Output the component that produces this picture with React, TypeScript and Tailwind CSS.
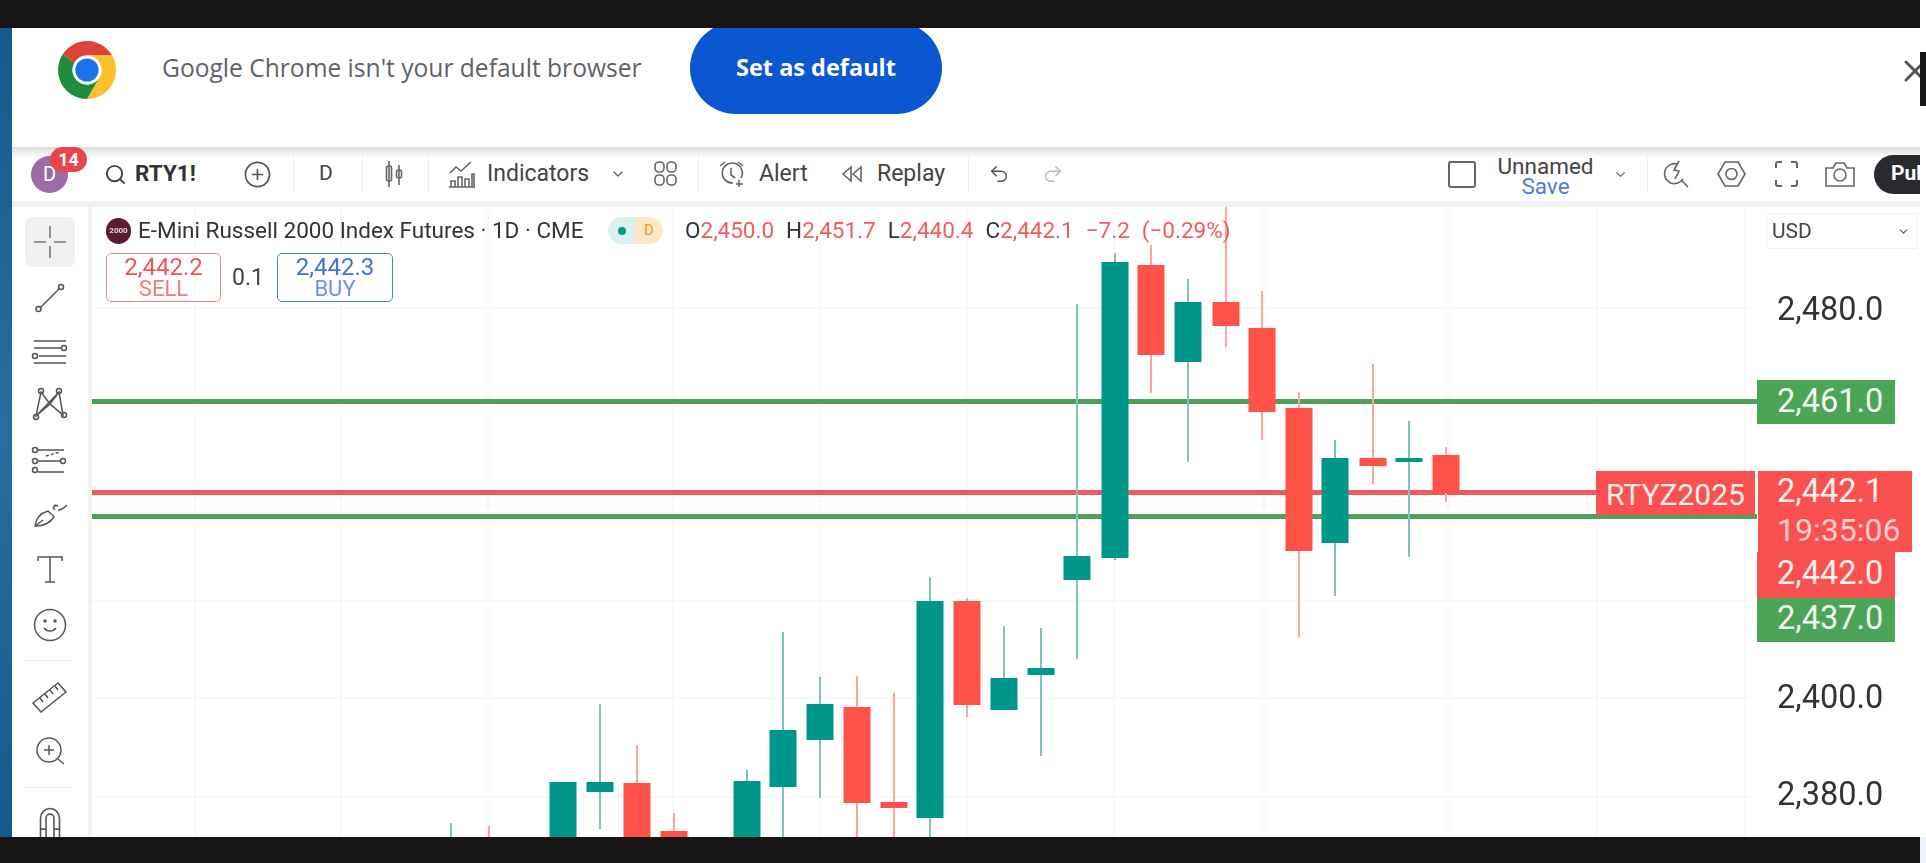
import React from 'react';
import { Search, CirclePlus, ChevronDown, Undo2, Redo2, X } from 'lucide-react';

const GREEN = '#00968a';
const RED = '#ff5249';

// [centre x, wick top, wick bottom, body top, body bottom, up?]
const candles: [number, number, number, number, number, boolean][] = [
  [451, 823, 838, 838, 838, true],
  [489, 826, 838, 838, 838, false],
  [563, 782, 838, 782, 838, true],
  [600, 704, 829, 782, 792, true],
  [637, 745, 838, 783, 838, false],
  [674, 813, 838, 831, 838, false],
  [747, 770, 838, 781, 838, true],
  [783, 632, 838, 730, 787, true],
  [820, 677, 798, 704, 740, true],
  [857, 676, 838, 707, 803, false],
  [894, 693, 838, 802, 808, false],
  [930, 577, 838, 601, 818, true],
  [967, 598, 717, 601, 705, false],
  [1004, 626, 710, 678, 710, true],
  [1041, 628, 756, 668, 675, true],
  [1077, 304, 659, 556, 580, true],
  [1115, 253, 560, 262, 558, true],
  [1151, 245, 393, 265, 355, false],
  [1188, 279, 462, 302, 362, true],
  [1226, 207, 347, 302, 326, false],
  [1262, 291, 440, 328, 412, false],
  [1299, 392, 637, 408, 551, false],
  [1335, 440, 596, 458, 543, true],
  [1373, 364, 484, 458, 466, false],
  [1409, 421, 557, 458, 462, true],
  [1446, 447, 502, 455, 493, false],
];

const gridX = [195, 341, 488, 673, 820, 967, 1114, 1264, 1448, 1597, 1745];
const gridY = [308, 406, 504, 601, 698, 797];

function ChartCanvas() {
  return (
    <svg className="absolute inset-0" width="1828" height="631" viewBox="92 207 1828 631">
      {gridX.map((x) => (
        <line key={x} x1={x} x2={x} y1="207" y2="838" stroke="#f7f7f7" strokeWidth="1.5" />
      ))}
      {gridY.map((y) => (
        <line key={y} x1="92" x2="1755" y1={y} y2={y} stroke="#f7f7f7" strokeWidth="1.5" />
      ))}
      <line x1="92" x2="1757" y1="401.5" y2="401.5" stroke="#4f9f5a" strokeWidth="5" />
      <line x1="92" x2="1600" y1="492.5" y2="492.5" stroke="#f4575a" strokeWidth="5" />
      <line x1="92" x2="1757" y1="516.5" y2="516.5" stroke="#4f9f5a" strokeWidth="5" />
      {candles.map(([x, wt, wb, bt, bb, up]) => (
        <g key={x}>
          <line x1={x} x2={x} y1={wt} y2={wb} stroke={up ? '#7fc2bd' : '#f9a5a0'} strokeWidth="2" />
          {bb > bt && <rect x={x - 13.5} y={bt} width="27" height={bb - bt} fill={up ? GREEN : RED} />}
        </g>
      ))}
    </svg>
  );
}

function ChromeLogo() {
  return (
    <svg width="58" height="58" viewBox="4 4 40 40" className="shrink-0">
      <path d="M7.2 13.2A20 20 0 0 1 41.32 14H24a10 10 0 0 0-8.66 5z" fill="#db4437" />
      <path d="M41.32 14H24a10 10 0 0 1 8.66 15L24 44a20 20 0 0 0 17.32-30z" fill="#fbc02d" />
      <path d="M7.2 13.2A20 20 0 0 0 24 44l8.66-15a10 10 0 0 1-17.32-10z" fill="#1e8e3e" />
      <circle cx="24" cy="24" r="10" fill="#fff" />
      <circle cx="24" cy="24" r="8" fill="#1a73e8" />
    </svg>
  );
}

function TopTool({ w, children }: { w: number; children: React.ReactNode }) {
  return (
    <svg width={w} height="28" viewBox={`0 0 ${w} 28`} fill="none" stroke="#666" strokeWidth="1.6" className="shrink-0">
      {children}
    </svg>
  );
}

function Sep({ ml }: { ml: string }) {
  return <div className={`${ml} w-px h-[38px] bg-[#f0f0f0] shrink-0`} />;
}

function TopToolbar() {
  return (
    <div className="h-[54px] flex items-center text-[#444] overflow-hidden bg-gradient-to-b from-[#dcdcdc] via-white via-20% to-white text-[23px] font-['Roboto',sans-serif]">
      <div className="ml-[19px] w-[37px] h-[37px] rounded-full bg-[#9c6ca5] shrink-0 flex items-center justify-center text-white text-[20px]">
        D
      </div>
      <div className="relative shrink-0 w-0 h-[54px]">
        <div className="absolute left-[-18px] top-0 w-[37px] h-[25px] rounded-full bg-[#e9454a] text-white text-[18px] font-bold flex items-center justify-center">14</div>
      </div>
      <Search className="ml-[36px] shrink-0 text-[#444]" size={23} />
      <div className="ml-[8px] w-[63px] shrink-0 font-bold text-[#333] text-[22.5px]">RTY1!</div>
      <CirclePlus className="ml-[45px] shrink-0 text-[#555]" size={29} strokeWidth={1.4} />
      <Sep ml="ml-[21px]" />
      <div className="ml-[24px] w-4 shrink-0 text-center text-[21px]">D</div>
      <Sep ml="ml-[28px]" />
      <div className="ml-[21px] w-5 shrink-0">
        <TopTool w={20}>
          <path d="M5 1v26M15 5v20" />
          <rect x="2.5" y="6" width="5" height="15" rx="2" />
          <rect x="12.5" y="10" width="5" height="8" rx="2" />
        </TopTool>
      </div>
      <Sep ml="ml-[24px]" />
      <div className="ml-[19px] w-[27px] shrink-0">
        <TopTool w={27}>
          <path d="M2 13l6-6 5 4 10-9M3 27v-6h4v6M10 27V17h4v10M17 27V19h4v8M24 27V14h2v13M1 27h26" />
        </TopTool>
      </div>
      <div className="ml-3 w-[103px] shrink-0">Indicators</div>
      <ChevronDown className="ml-[20px] shrink-0 text-[#666]" size={16} />
      <div className="ml-[26px] w-[26px] shrink-0">
        <TopTool w={26}>
          <rect x="3" y="2" width="9" height="10" rx="4" />
          <rect x="15" y="2" width="9" height="10" rx="4" />
          <rect x="3" y="15" width="9" height="10" rx="4" />
          <rect x="15" y="15" width="9" height="10" rx="4" />
        </TopTool>
      </div>
      <Sep ml="ml-[20px]" />
      <div className="ml-[19px] w-[27px] shrink-0">
        <TopTool w={27}>
          <path d="M15 23a10 10 0 1 1 8-5M13 8v7l4 3M2 6l5-4M20 2l5 4M21 20v7M18 24h7" />
        </TopTool>
      </div>
      <div className="ml-[14px] w-[51px] shrink-0">Alert</div>
      <div className="ml-[30px] w-[23px] shrink-0">
        <TopTool w={23}>
          <path d="M11 7l-8 7 8 7zM21 7l-8 7 8 7z" />
        </TopTool>
      </div>
      <div className="ml-[14px] w-[69px] shrink-0">Replay</div>
      <Sep ml="ml-[22px]" />
      <Undo2 className="ml-[19px] shrink-0 text-[#555]" size={22} strokeWidth={1.6} />
      <Redo2 className="ml-[32px] shrink-0 text-[#bbb]" size={22} strokeWidth={1.6} />
      <div className="ml-[384px] w-[28px] h-[27px] rounded-[3px] border-2 border-[#666] shrink-0" />
      <div className="ml-[21px] w-[97px] shrink-0 flex flex-col items-center pt-[4px] text-[22.5px]">
        <div className="leading-[20px] text-[#444]">Unnamed</div>
        <div className="leading-[20px] text-[#4a7fe0]">Save</div>
      </div>
      <ChevronDown className="ml-[19px] shrink-0 text-[#666]" size={15} />
      <Sep ml="ml-[19px]" />
      <div className="ml-[14px] w-[28px] shrink-0">
        <TopTool w={28}>
          <path d="M15 4a10 10 0 1 0 6 15M19 20l7 7M17 1l-5 9 5 1-4 8" />
        </TopTool>
      </div>
      <div className="ml-[26px] w-[31px] shrink-0">
        <TopTool w={31}>
          <path d="M9 2h13l7 12-7 12H9L2 14z" />
          <circle cx="15.5" cy="14" r="5.5" />
        </TopTool>
      </div>
      <div className="ml-[27px] w-[25px] shrink-0">
        <TopTool w={25}>
          <path d="M8 2H4Q2 2 2 4v4M17 2h4q2 0 2 2v4M8 26H4q-2 0-2-2v-4M17 26h4q2 0 2-2v-4" strokeWidth="2" />
        </TopTool>
      </div>
      <div className="ml-[25px] w-[32px] shrink-0">
        <TopTool w={32}>
          <path d="M2 8h7l3-5h8l3 5h7v18H2z" />
          <circle cx="16" cy="15" r="6" />
        </TopTool>
      </div>
      <div className="ml-[18px] w-[100px] h-[39px] rounded-full bg-[#2a2a2e] text-white font-bold pl-[17px] flex items-center shrink-0 text-[21px]">
        Publish
      </div>
    </div>
  );
}

function SideIcon({ children }: { children: React.ReactNode }) {
  return (
    <div className="h-[54px] flex items-center justify-center">
      <svg width="38" height="38" viewBox="0 0 38 38" fill="none" stroke="#555" strokeWidth="1.5">
        {children}
      </svg>
    </div>
  );
}

function SideToolbar() {
  return (
    <div className="w-[76px] shrink-0 flex flex-col items-center pt-[10px] overflow-hidden">
      <div className="w-[50px] h-[50px] shrink-0 mb-[4px] rounded-md bg-[#f0f0f0] flex items-center justify-center">
        <svg width="34" height="34" viewBox="0 0 34 34" stroke="#777" strokeWidth="1.6">
          <path d="M17 1v12M17 21v12M1 17h12M21 17h12" />
        </svg>
      </div>
      <SideIcon>
        <path d="M9 29L29 9" />
        <circle cx="7.5" cy="30" r="2.5" />
        <circle cx="30" cy="8" r="2.5" />
      </SideIcon>
      <SideIcon>
        <path d="M3 9h32M3 16h27M8 24h27" />
        <circle cx="33" cy="16" r="2.5" />
        <circle cx="4" cy="24" r="2.5" />
        <path d="M3 31h32" />
      </SideIcon>
      <SideIcon>
        <path d="M10 7L5 31l14-12 13 11-4-23-9 12L10 7zM5 31l23-24" />
        <circle cx="10" cy="6" r="2.5" />
        <circle cx="28" cy="6" r="2.5" />
        <circle cx="5" cy="32" r="2.5" />
        <circle cx="33" cy="30" r="2.5" />
      </SideIcon>
      <div className="mt-[3px]">
        <SideIcon>
          <path d="M7 8h26M7 19h22M7 30h26" />
          <path d="M15 14l14-4" strokeDasharray="3 2" />
          <circle cx="4" cy="8" r="2.5" />
          <circle cx="4" cy="19" r="2.5" />
          <circle cx="4" cy="28" r="2.5" />
          <circle cx="32" cy="19" r="2.5" />
        </SideIcon>
      </div>
      <SideIcon>
        <path d="M4 31c1-8 6-13 13-15 3 3 5 4 6 6-4 6-10 9-19 9zM4 31l8-6" />
        <path d="M24 15c-3-2-1-6 3-4M27 15c4 0 7-3 9-5" />
      </SideIcon>
      <div className="mt-px">
        <SideIcon>
          <path d="M7 11V7h24v4M19 7v25M14 32h10" />
        </SideIcon>
      </div>
      <div className="mt-[2px]">
        <SideIcon>
          <circle cx="19" cy="19" r="15.5" />
          <path d="M13 22c3 4 9 4 12 0" />
          <circle cx="14" cy="15" r="1" />
          <circle cx="24" cy="15" r="1" />
        </SideIcon>
      </div>
      <div className="h-px w-[48px] bg-[#eeeeee] my-[8px] shrink-0" />
      <SideIcon>
        <path d="M2 27L27 7l8 9-25 20z" />
        <path d="M9 22l3 4M14 18l3 4M19 14l3 4M24 10l3 4" />
      </SideIcon>
      <div className="mt-[2px]">
        <SideIcon>
          <circle cx="18" cy="18" r="12" />
          <path d="M27 27l6 5M18 13v10M13 18h10" />
        </SideIcon>
      </div>
      <div className="h-px w-[48px] bg-[#eeeeee] my-[9px] shrink-0" />
      <svg width="24" height="30" viewBox="0 0 30 38" fill="none" stroke="#555" strokeWidth="2" className="shrink-0 mt-[10px]">
        <path d="M3 38V14a12 12 0 0 1 24 0v24M10 38V14a5 5 0 0 1 10 0v24M3 28h7M20 28h7" />
      </svg>
    </div>
  );
}

function Legend() {
  return (
    <div className="absolute left-[14px] top-[10px] font-['Roboto',sans-serif]">
      <div className="flex items-center h-[27px] text-[22.5px]">
        <div className="w-[25px] h-[26px] rounded-full bg-[#5c1a33] text-[#e8d5dc] text-[8px] font-bold flex items-center justify-center shrink-0">2000</div>
        <span className="ml-[7px] w-[445px] text-[#333] whitespace-nowrap">E-Mini Russell 2000 Index Futures · 1D · CME</span>
        <div className="ml-[25px] w-[55px] h-[27px] rounded-full flex shrink-0 overflow-hidden">
          <div className="w-[27px] bg-[#d9f2ef] flex items-center justify-center">
            <div className="w-[8px] h-[8px] rounded-full bg-[#089981]" />
          </div>
          <div className="w-[28px] bg-[#fde7c8] text-[#f59e0b] text-[15px] flex items-center justify-center">D</div>
        </div>
        <div className="ml-[22px] whitespace-nowrap text-[#f25c5c] flex gap-[12px]">
          <span><span className="text-[#333]">O</span>2,450.0</span>
          <span><span className="text-[#333]">H</span>2,451.7</span>
          <span><span className="text-[#333]">L</span>2,440.4</span>
          <span><span className="text-[#333]">C</span>2,442.1</span>
          <span>−7.2</span>
          <span>(−0.29%)</span>
        </div>
      </div>
      <div className="flex items-center mt-[9px] text-[23px] leading-[21px]">
        <div className="w-[115px] h-[49px] rounded-[5px] border border-[#f08a8a] text-[#ee5555] flex flex-col items-center justify-center">
          <div className="text-[24px]">2,442.2</div>
          <div className="text-[22px] text-[#f27c7c]">SELL</div>
        </div>
        <span className="ml-[11px] w-[32px] text-[#444]">0.1</span>
        <div className="ml-[13px] w-[116px] h-[49px] rounded-[5px] border border-[#4a7fe0] text-[#3f74dc] flex flex-col items-center justify-center">
          <div className="text-[24px]">2,442.3</div>
          <div className="text-[22px] text-[#6c93e6]">BUY</div>
        </div>
      </div>
    </div>
  );
}

function PriceAxis() {
  return (
    <div className="font-['Roboto',sans-serif] text-[32.5px] leading-none">
      {[
        ['2,480.0', 'top-[86px]'],
        ['2,400.0', 'top-[474px]'],
        ['2,380.0', 'top-[571px]'],
      ].map(([label, top]) => (
        <span key={label} className={`absolute left-[1685px] text-[#333] ${top}`}>
          {label}
        </span>
      ))}
      <div className="absolute left-[1674px] top-[6px] w-[151px] h-[36px] border border-[#f2f2f2] flex items-center justify-between pl-[5px] pr-[6px] text-[21px] text-[#444]">
        USD
        <ChevronDown size={13} className="text-[#555]" />
      </div>
      <div className="absolute left-[1665px] top-[173px] w-[138px] h-[44px] bg-[#4ca556] text-[#f4fbf4] pl-[20px] pb-px flex items-center">2,461.0</div>
      <div className="absolute left-[1504px] top-[264px] w-[159px] h-[44px] bg-[#fb5050] text-[#fdf0f0] text-[30px] pl-[10px] pt-[3px] flex items-center">RTYZ2025</div>
      <div className="absolute left-[1666px] top-[264px] w-[154px] h-[81px] bg-[#fb5050] text-[#fdf0f0] pl-[19px] pt-[4px]">
        2,442.1
        <div className="text-[32px] text-[#fcd0d0] mt-[6px] whitespace-nowrap">19:35:06</div>
      </div>
      <div className="absolute left-[1665px] top-[345px] w-[138px] h-[46px] bg-[#fb5050] text-[#fdf0f0] pl-[20px] pb-[3px] flex items-center">2,442.0</div>
      <div className="absolute left-[1665px] top-[391px] w-[138px] h-[44px] bg-[#4ca556] text-[#f4fbf4] pl-[20px] pb-[3px] flex items-center">2,437.0</div>
    </div>
  );
}

export default function App() {
  return (
    <div className="relative w-[1926px] h-[863px] bg-white overflow-hidden font-['Roboto',sans-serif]">
      <div className="relative z-10 h-7 w-[1920px] bg-[#171516]" />
      <div className="flex h-[809px] w-[1920px]">
        <div className="w-3 shrink-0 bg-gradient-to-b from-[#17598f] via-[#2a6ca3] to-[#17598f]" />
        <div className="w-[1908px] flex flex-col overflow-hidden blur-[0.7px]">
          {/* Chrome default browser banner */}
          <div className="h-[119px] shrink-0 flex items-start bg-white">
            <div className="ml-[46px] mt-[13px]">
              <ChromeLogo />
            </div>
            <div className="ml-[46px] mt-[24px] w-[479px] shrink-0 whitespace-nowrap text-[24.6px] leading-[32px] text-[#5f6368] font-['Open_Sans',sans-serif]">
              Google Chrome isn't your default browser
            </div>
            <div className="ml-[49px] -mt-[6px] w-[252px] h-[92px] shrink-0 rounded-full bg-[#0b57d0] text-white text-[23.5px] font-bold flex items-center justify-center font-['Open_Sans',sans-serif]">
              Set as default
            </div>
            <X className="ml-[955px] mt-[25px] shrink-0 text-[#555]" size={36} strokeWidth={2} />
          </div>
          <TopToolbar />
          <div className="h-[6px] shrink-0 bg-[#f1f1f1]" />
          <div className="flex-1 flex min-h-0">
            <SideToolbar />
            <div className="w-1 shrink-0 bg-[#f3f3f3]" />
            <div className="relative flex-1">
              <ChartCanvas />
              <Legend />
              <PriceAxis />
            </div>
          </div>
        </div>
      </div>
      <div className="flex h-[26px]">
        <div className="w-[1920px] bg-[#171516]" />
        <div className="flex-1 bg-[#f0f3fa]" />
      </div>
      {/* stray capture artefact on the right edge */}
      <div className="absolute left-[1920px] top-[52px] w-[6px] h-[54px] bg-[#171516]" />
    </div>
  );
}
